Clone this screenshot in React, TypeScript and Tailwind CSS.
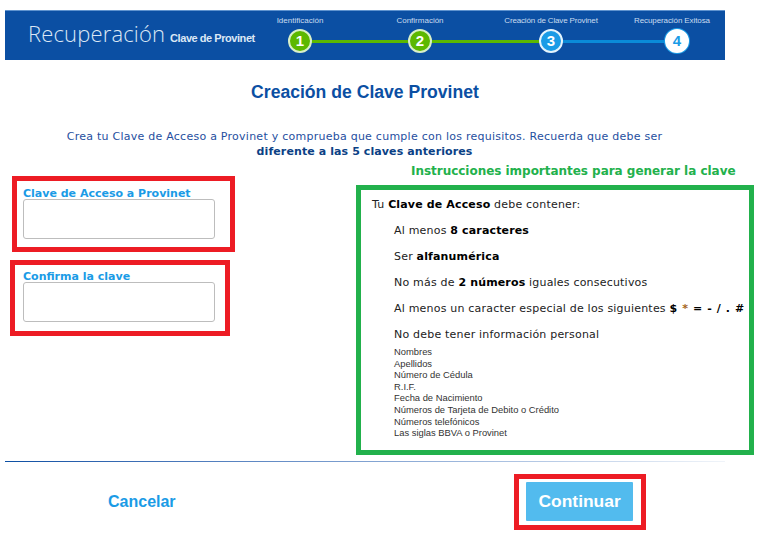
const steps = [
  { n: 1, label: 'Identificación', width: 'w-[120px]', circle: 'bg-[#5cb800] text-white border-[#d8efc8]', line: 'w-[120px] bg-[#5cb800]', labelClass: '' },
  { n: 2, label: 'Confirmación', width: 'w-[120px]', circle: 'bg-[#5cb800] text-white border-[#d8efc8]', line: 'w-[131px] bg-[#5cb800]', labelClass: '' },
  { n: 3, label: 'Creación de Clave Provinet', width: 'w-[142px]', circle: 'bg-[#1a9be6] text-white border-[#e4f4fd]', line: 'w-[126px] bg-[#0a8bd8]', labelClass: 'tracking-[-0.15px]' },
  { n: 4, label: 'Recuperación Exitosa', width: 'w-[110px]', circle: 'bg-white text-[#1a9be6] border-white ring-1 ring-[#1a9be6]', line: '', labelClass: 'mr-[10px] tracking-[-0.1px]' },
];

const personal = [
  'Nombres',
  'Apellidos',
  'Número de Cédula',
  'R.I.F.',
  'Fecha de Nacimiento',
  'Números de Tarjeta de Debito o Crédito',
  'Números telefónicos',
  'Las siglas BBVA o Provinet',
];

const verdana = "font-['DejaVu_Sans',sans-serif]";
const arial = "font-['Liberation_Sans',Arial,sans-serif]";

function Stepper() {
  return (
    <div className="flex">
      {steps.map((step) => (
        <div key={step.n} className={`relative flex shrink-0 flex-col items-center ${step.width}`}>
          <span className={`mt-[4px] h-[11px] whitespace-nowrap text-[8px] leading-[11px] text-[#c9dcf0] ${arial} ${step.labelClass}`}>
            {step.label}
          </span>
          {step.line && <div className={`absolute left-1/2 top-[29px] h-[3px] ${step.line}`} />}
          <div
            className={`relative mt-[3px] flex h-[24px] w-[24px] items-center justify-center rounded-full border-2 text-[15px] font-bold ${arial} ${step.circle}`}
          >
            {step.n}
          </div>
        </div>
      ))}
    </div>
  );
}

function Field({ label, className }: { label: string; className: string }) {
  return (
    <div className={`h-[76px] border-[5px] border-[#ed1c24] ${className}`}>
      <label className={`block h-[12px] text-[11px] font-bold leading-[14px] text-[#1a9be6] ${verdana}`}>
        {label}
      </label>
      <input className="relative block h-[40px] w-[192px] rounded-[3px] border border-[#bdbdbd] bg-white" type="password" />
    </div>
  );
}

export default function App() {
  return (
    <div className="h-[535px] w-[759px] overflow-hidden bg-white">
      {/* Banner */}
      <div className="ml-[5px] mt-[10px] flex h-[50px] w-[720px] overflow-hidden border-t border-[#5f93cf] bg-[#0b4fa3]">
        <div className="flex w-[235px] shrink-0 items-baseline whitespace-nowrap pl-[23px] pt-[6px] text-[#dbe7f5]">
          <span className="font-['Open_Sans',sans-serif] text-[22px] font-light leading-[32px] tracking-[0.15px]">Recuperación</span>
          <span className={`ml-[5px] text-[11px] font-bold tracking-[-0.45px] ${arial}`}>Clave de Provinet</span>
        </div>
        <Stepper />
      </div>

      <h1 className={`mt-[22px] pr-[29px] text-center text-[17.6px] font-bold leading-[20px] text-[#0b4fa3] ${arial}`}>
        Creación de Clave Provinet
      </h1>

      <div className={`mt-[27px] pr-[30px] text-center text-[11px] leading-[15px] tracking-[0.25px] text-[#1f4fa0] ${verdana}`}>
        <p>Crea tu Clave de Acceso a Provinet y comprueba que cumple con los requisitos. Recuerda que debe ser</p>
        <p className="font-bold tracking-[0.1px] text-[#0b4185]">diferente a las 5 claves anteriores</p>
      </div>

      <div className="flex">
        {/* Fields */}
        <div className="w-[356px] shrink-0 pt-[17px]">
          <Field label="Clave de Acceso a Provinet" className="ml-[12px] w-[223px] pl-[6px] pt-[6px]" />
          <Field label="Confirma la clave" className="ml-[10px] mt-[8px] w-[220px] pl-[8px] pt-[5px]" />
        </div>

        {/* Requirements */}
        <div>
          <p className={`ml-[55px] mt-[5px] h-[14px] whitespace-nowrap text-[12px] font-bold leading-[14px] tracking-[-0.03px] text-[#22b14c] ${verdana}`}>
            Instrucciones importantes para generar la clave
          </p>
          <div className={`mt-[7px] h-[270px] w-[398px] border-[5px] border-[#22b14c] pl-[11px] text-[11px] leading-[14px] tracking-[0.2px] text-[#222] ${verdana}`}>
            <p className="mt-[8px]">
              Tu <b className="tracking-[0.15px] text-black">Clave de Acceso</b> debe contener:
            </p>
            <div className="ml-[22px] mt-[12px] flex flex-col gap-[12px] whitespace-nowrap">
              <p>Al menos <b className="tracking-[0.15px] text-black">8 caracteres</b></p>
              <p>Ser <b className="tracking-[0.15px] text-black">alfanumérica</b></p>
              <p>No más de <b className="tracking-[0.15px] text-black">2 números</b> iguales consecutivos</p>
              <p>
                Al menos un caracter especial de los siguientes <b className="tracking-[0.6px] text-black">$ <span className="text-[#a5651a]">*</span> = - / . #</b>
              </p>
              <p>No debe tener información personal</p>
            </div>
            <ul className={`ml-[22px] mt-[4px] text-[9.4px] leading-[11.6px] tracking-normal text-[#333] ${arial}`}>
              {personal.map((item) => (
                <li key={item}>{item}</li>
              ))}
            </ul>
          </div>
        </div>
      </div>

      <div className="ml-[5px] mt-[6px] h-px w-[720px] bg-gradient-to-r from-[#0b4fa3] to-[#f0f4f9]" />

      {/* Actions */}
      <div className="flex">
        <a className={`ml-[108px] mt-[31px] text-[16px] font-bold leading-[18px] text-[#1a9be6] ${arial}`}>Cancelar</a>
        <div className="ml-[338px] mt-[12px] flex h-[56px] w-[132px] items-start justify-center border-[5px] border-[#ed1c24] pt-[3px]">
          <button className={`h-[39px] w-[107px] rounded-[1px] bg-[#52bbee] text-[17.4px] font-bold text-white ${arial}`}>
            Continuar
          </button>
        </div>
      </div>
    </div>
  );
}
